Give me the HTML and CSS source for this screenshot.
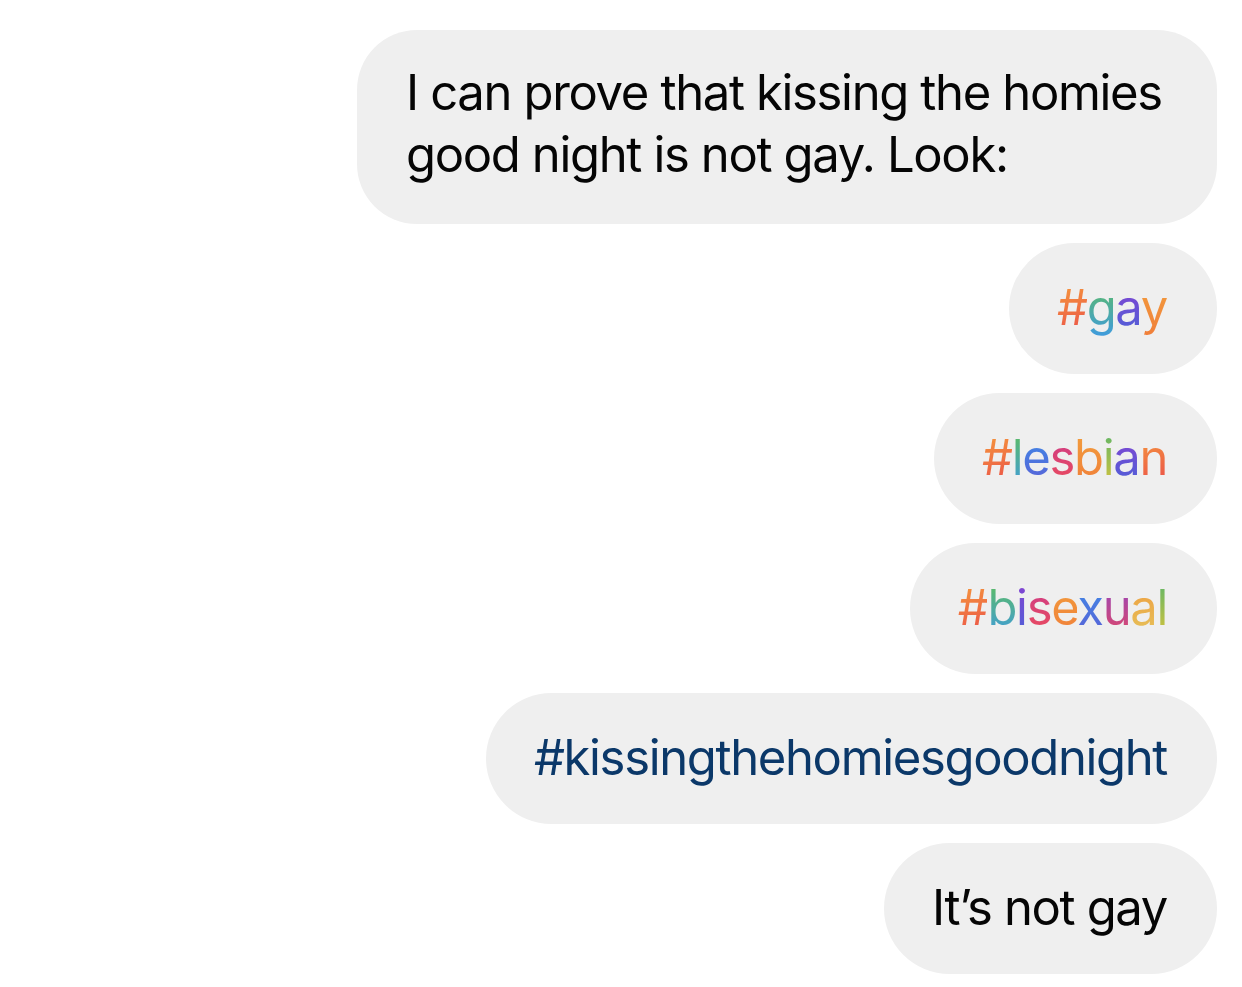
FILE: index.html
```html
<!DOCTYPE html>
<html lang="en">
<head>
<meta charset="utf-8">
<title>Messages</title>
<link rel="stylesheet" href="styles.css">
</head>
<body>
<main class="thread">
  <div class="bubble multi">I can prove that kissing the homies good night is not gay. Look:</div>
  <div class="bubble"><span class="rainbow"><span class="c1">#</span><span class="c2">g</span><span class="c4">a</span><span class="c6">y</span></span></div>
  <div class="bubble"><span class="rainbow"><span class="c1">#</span><span class="c2">l</span><span class="c3">e</span><span class="c5">s</span><span class="c6">b</span><span class="c7">i</span><span class="c4">a</span><span class="c1">n</span></span></div>
  <div class="bubble"><span class="rainbow"><span class="c1">#</span><span class="c2">b</span><span class="c4">i</span><span class="c5">s</span><span class="c6">e</span><span class="c3">x</span><span class="c8">u</span><span class="c9">a</span><span class="c7">l</span></span></div>
  <div class="bubble"><span class="tag">#kissingthehomiesgoodnight</span></div>
  <div class="bubble">It’s not gay</div>
</main>
</body>
</html>
```

FILE: styles.css
```css
html, body {
  margin: 0;
  background: #ffffff;
}

body {
  font-family: "Inter", "Noto Sans", sans-serif;
  color: #050505;
}

.thread {
  display: flex;
  flex-direction: column;
  align-items: flex-end;
  gap: 19px;
  padding: 30px 25px 0 0;
}

.bubble {
  background: #efefef;
  border-radius: 66px;
  height: 131px;
  box-sizing: border-box;
  padding: 0 50px 2px 48px;
  display: flex;
  align-items: center;
  font-size: 49px;
  letter-spacing: -1.35px;
  white-space: nowrap;
}

.bubble.multi {
  width: 860px;
  height: 194px;
  white-space: normal;
  line-height: 62px;
  border-radius: 60px;
  padding: 0 30px 6px 49px;
}

.tag {
  color: #0b3869;
}

.rainbow span {
  -webkit-background-clip: text;
  background-clip: text;
  color: transparent;
}

.c1 { background-image: linear-gradient(160deg, #f6a13a, #ea4b4b); }
.c2 { background-image: linear-gradient(180deg, #5fbf56, #3f9be0); }
.c3 { background-image: linear-gradient(180deg, #3b8fe8, #5b5fd6); }
.c4 { background-image: linear-gradient(180deg, #8a3fd0, #4b62d8); }
.c5 { background-image: linear-gradient(180deg, #c9388f, #ec4d5a); }
.c6 { background-image: linear-gradient(180deg, #f2a03c, #f07e3a); }
.c7 { background-image: linear-gradient(180deg, #56b56a, #d9c33a); }
.c8 { background-image: linear-gradient(180deg, #8c45c8, #e04866); }
.c9 { background-image: linear-gradient(180deg, #f09a3e, #e5c35a); }
```
